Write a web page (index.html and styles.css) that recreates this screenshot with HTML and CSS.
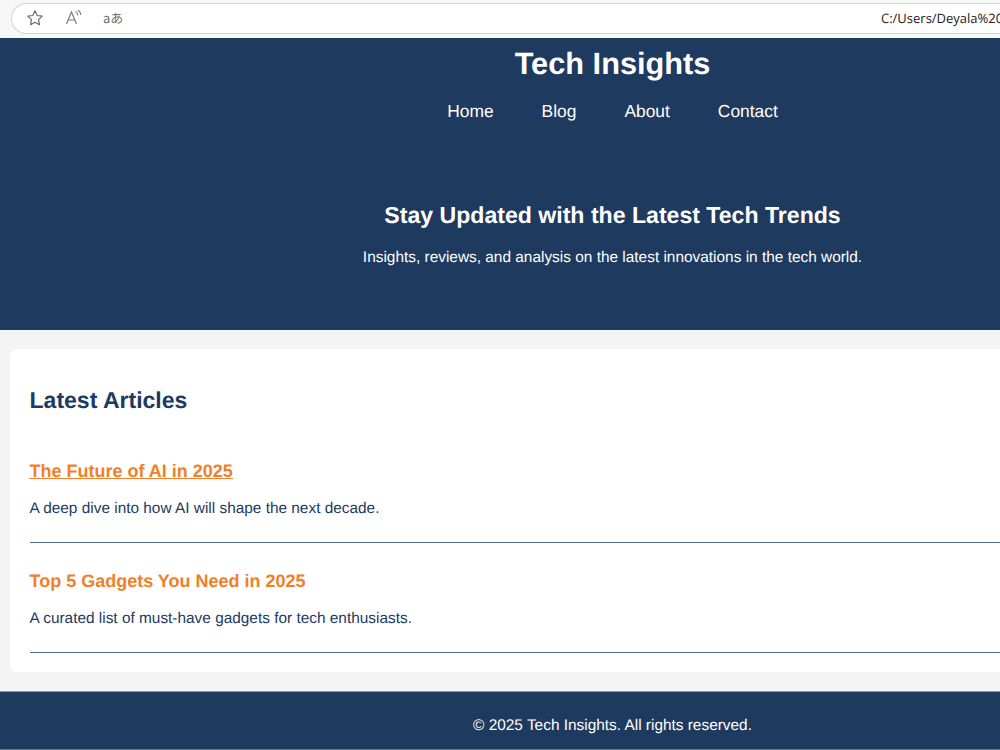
FILE: index.html
```html
<!DOCTYPE html>
<html lang="en">
<head>
<meta charset="utf-8">
<title>Tech Insights</title>
<link rel="stylesheet" href="styles.css">
</head>
<body>
<div class="browser">
  <div class="address">
    <svg class="icon icon-star" width="18" height="18" viewBox="0 0 18 18"><path d="M9 1.800l2.200 4.700 5 .6-3.700 3.500 1 5.100L9 13.200l-4.500 2.500 1-5.100L1.800 7.100l5-.6z" fill="none" stroke="#6b6b6b" stroke-width="1.200" stroke-linejoin="round"/></svg>
    <svg class="icon icon-read" width="18" height="18" viewBox="0 0 18 18"><path d="M1.500 15L6.500 3l5 12M3.200 11h6.600" fill="none" stroke="#7a7a7a" stroke-width="1.200"/><path d="M10.500 2.500c1.500.8 2.300 2 2.400 3.700M12.800 1c1.900 1.200 2.900 2.800 3 5" fill="none" stroke="#7a7a7a" stroke-width="1.100"/></svg>
    <span class="translate">aあ</span>
    <span class="url">C:/Users/Deyala%20</span>
  </div>
</div>
<div class="page">
  <header class="site-header">
    <h1 class="site-title">Tech Insights</h1>
    <nav class="nav">
      <a class="nav-link" href="#">Home</a>
      <a class="nav-link" href="#">Blog</a>
      <a class="nav-link" href="#">About</a>
      <a class="nav-link" href="#">Contact</a>
    </nav>
    <section class="hero">
      <h2 class="hero-title">Stay Updated with the Latest Tech Trends</h2>
      <p class="hero-text">Insights, reviews, and analysis on the latest innovations in the tech world.</p>
    </section>
  </header>
  <main class="card">
    <h2 class="card-title">Latest Articles</h2>
    <article class="article">
      <h3 class="article-title"><a class="article-link" href="#">The Future of AI in 2025</a></h3>
      <p class="article-text">A deep dive into how AI will shape the next decade.</p>
    </article>
    <article class="article">
      <h3 class="article-title">Top 5 Gadgets You Need in 2025</h3>
      <p class="article-text">A curated list of must-have gadgets for tech enthusiasts.</p>
    </article>
  </main>
  <footer class="site-footer">© 2025 Tech Insights. All rights reserved.</footer>
</div>
</body>
</html>
```
FILE: styles.css
```css
html, body {
  margin: 0;
  padding: 0;
  width: 1000px;
  height: 750px;
  overflow: hidden;
  background: #f4f4f4;
  font-family: "Liberation Sans", Arial, sans-serif;
  text-rendering: geometricPrecision;
}
.browser {
  height: 38px;
  box-sizing: border-box;
  padding: 3px 0 4px 11px;
  background: #f7f7f7;
}
.address {
  height: 31px;
  box-sizing: border-box;
  border: 1px solid #d4d4d4;
  border-right: 0;
  border-radius: 16px 0 0 16px;
  background: #fff;
  display: flex;
  align-items: center;
  padding-left: 14px;
  padding-bottom: 1px;
  overflow: hidden;
}
.icon { flex: none; }
.icon-read { margin-left: 21px; }
.translate {
  margin-left: 20px;
  font-family: "Noto Sans CJK JP", "Noto Sans", sans-serif;
  font-size: 13px;
  line-height: 18px;
  color: #6f6f6f;
}
.url {
  margin-left: auto;
  flex: none;
  width: 119px;
  white-space: nowrap;
  overflow: hidden;
  font-family: "Open Sans", sans-serif;
  font-size: 13px;
  color: #222;
}
.page {
  width: 1225px;
}
.site-header {
  background: #1e3a5f;
  color: #fff;
  height: 292px;
  padding-top: 1px;
  box-sizing: border-box;
  text-align: center;
}
.site-title {
  margin: 6px 0 0;
  font-size: 30.72px;
  line-height: 37px;
  font-weight: 700;
}
.nav {
  display: flex;
  justify-content: center;
  gap: 48px;
  margin-top: 19px;
}
.nav-link {
  color: #fff;
  text-decoration: none;
  font-size: 17.4px;
  line-height: 21px;
}
.hero { padding-top: 80px; }
.hero-title {
  margin: 0;
  font-size: 23.1px;
  line-height: 27px;
  font-weight: 700;
}
.hero-text {
  margin: 20px 0 0;
  font-size: 15.42px;
  line-height: 18px;
}
.card {
  margin: 19px 0 0 10px;
  width: 1205px;
  height: 323px;
  box-sizing: border-box;
  background: #fff;
  border-radius: 8px;
  padding: 20px 20px 20px 19.5px;
  color: #1e3a5f;
}
.card-title {
  margin: 17px 0 19px;
  font-size: 23.04px;
  line-height: 28px;
  font-weight: 700;
}
.article {
  border-bottom: 1px solid #4a6a8f;
  height: 110px;
  box-sizing: border-box;
  padding-top: 28px;
}
.article-title {
  margin: 0;
  font-size: 18px;
  line-height: 21px;
  font-weight: 700;
  color: #f17f29;
}
.article-link { color: #f17f29; }
.article-text {
  margin: 18px 0 0;
  font-size: 15.4px;
  line-height: 17px;
}
.site-footer {
  margin-top: 19px;
  height: 59px;
  background: #1e3a5f;
  border-top: 1px solid #8f9bab;
  border-bottom: 1px solid #66788f;
  color: #fff;
  text-align: center;
  font-size: 15.4px;
  line-height: 18px;
  padding-top: 25px;
  box-sizing: border-box;
}
```
